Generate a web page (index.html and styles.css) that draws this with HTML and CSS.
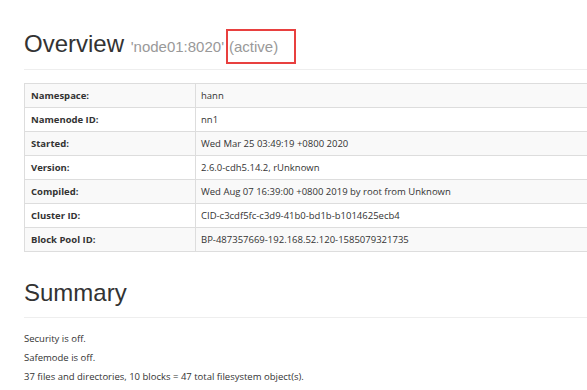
FILE: index.html
```html
<!DOCTYPE html>
<html lang="en">
<head>
    <meta charset="UTF-8">
    <title>Namenode information</title>
    <link rel="stylesheet" href="styles.css">
</head>
<body>
    <div class="container">
        <div class="page-header">
            <h1>Overview <small>'node01:8020'</small><small class="marked">(active)</small></h1>
        </div>

        <table class="info-table">
            <tr><th>Namespace:</th><td>hann</td></tr>
            <tr><th>Namenode ID:</th><td>nn1</td></tr>
            <tr><th>Started:</th><td>Wed Mar 25 03:49:19 +0800 2020</td></tr>
            <tr><th>Version:</th><td>2.6.0-cdh5.14.2, rUnknown</td></tr>
            <tr><th>Compiled:</th><td>Wed Aug 07 16:39:00 +0800 2019 by root from Unknown</td></tr>
            <tr><th>Cluster ID:</th><td>CID-c3cdf5fc-c3d9-41b0-bd1b-b1014625ecb4</td></tr>
            <tr><th>Block Pool ID:</th><td>BP-487357669-192.168.52.120-1585079321735</td></tr>
        </table>

        <div class="page-header summary">
            <h1>Summary</h1>
        </div>

        <p>Security is off.</p>
        <p>Safemode is off.</p>
        <p>37 files and directories, 10 blocks = 47 total filesystem object(s).</p>
    </div>
</body>
</html>
```

FILE: styles.css
```css
* {
    margin: 0;
    padding: 0;
    box-sizing: border-box;
}

body {
    font-family: 'Open Sans', 'DejaVu Sans', sans-serif;
    font-size: 9.5px;
    color: #333;
    background-color: #fff;
    overflow: hidden;
}

.container {
    width: 760px;
    padding-left: 24px;
}

.page-header {
    margin-top: 29px;
    padding-bottom: 10px;
    border-bottom: 1px solid #eee;
}

.page-header.summary {
    margin-top: 26px;
    padding-bottom: 9px;
    margin-bottom: 11px;
}

h1 {
    font-family: 'Liberation Sans', Arial, sans-serif;
    font-size: 24px;
    font-weight: 400;
    line-height: 30px;
    color: #333;
}

h1 small {
    font-size: 15px;
    line-height: 1;
    color: #999;
}

/* red annotation box around the state */
h1 small.marked {
    position: relative;
    margin-left: 5px;
}

h1 small.marked::after {
    content: '';
    position: absolute;
    top: -9px;
    bottom: -9px;
    left: -3px;
    right: -18px;
    border: 2px solid #e8403f;
}

.info-table {
    width: 100%;
    margin-top: 13px;
    border-collapse: collapse;
    border: 1px solid #ddd;
}

.info-table th,
.info-table td {
    height: 24px;
    padding: 0 6px;
    text-align: left;
    vertical-align: middle;
    border: 1px solid #ddd;
    line-height: 1;
}

.info-table th {
    width: 171px;
    font-weight: 700;
}

.info-table td {
    padding-left: 5px;
}

.info-table tr:nth-child(odd) {
    background-color: #f9f9f9;
}

p {
    line-height: 19px;
}
```
